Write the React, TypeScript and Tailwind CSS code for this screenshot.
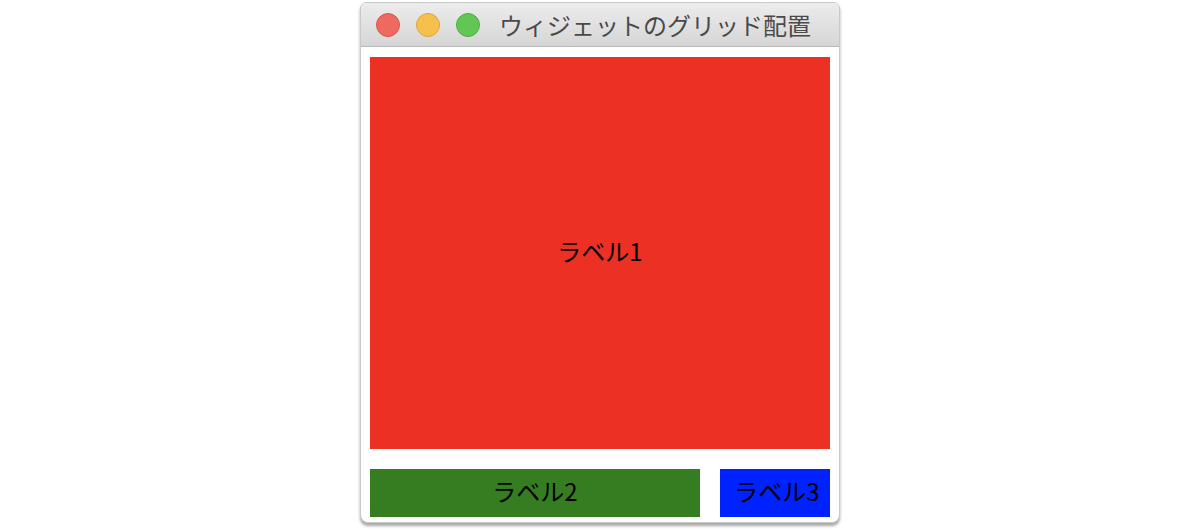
import React from "react";

export default function App() {
  const font = { fontFamily: '"Noto Sans CJK JP", "Noto Sans", sans-serif' };
  return (
    <div className="w-[1200px] h-[531px] bg-white flex justify-center pt-[2px]" style={font}>
      <div className="w-[480px] h-[521px] flex flex-col rounded-t-[6px] rounded-b-[8px] border border-[#c8c8c8] shadow-[0_3px_3px_rgba(0,0,0,0.35)] bg-white overflow-hidden">
        <div className="h-[44px] shrink-0 flex items-center bg-gradient-to-b from-[#ececec] to-[#d6d6d6] border-b border-[#b9b9b9]">
          <div className="flex items-center gap-[16px] pl-[15px]">
            <span className="w-[24px] h-[24px] rounded-full bg-[#ee6a5f] border border-[#d9574d]" />
            <span className="w-[24px] h-[24px] rounded-full bg-[#f6c04f] border border-[#dea63c]" />
            <span className="w-[24px] h-[24px] rounded-full bg-[#62c654] border border-[#4fad43]" />
          </div>
          <span className="ml-[19px] text-[24px] leading-none text-[#4a4a4a]">ウィジェットのグリッド配置</span>
        </div>
        <div className="flex-1 flex flex-col px-[9px] pt-[10px]">
          <div className="h-[392px] bg-[#ec3023] flex items-center justify-center text-[24px] leading-none text-black pb-[4px]">ラベル1</div>
          <div className="grid grid-cols-[330px_110px] gap-x-[20px] mt-[20px] h-[48px]">
            <div className="bg-[#367d22] flex items-center justify-center text-[24px] leading-none text-black pb-[4px]">ラベル2</div>
            <div className="bg-[#0022fe] flex items-center justify-center text-[24px] leading-none text-black pb-[4px] pl-[4px]">ラベル3</div>
          </div>
        </div>
      </div>
    </div>
  );
}
